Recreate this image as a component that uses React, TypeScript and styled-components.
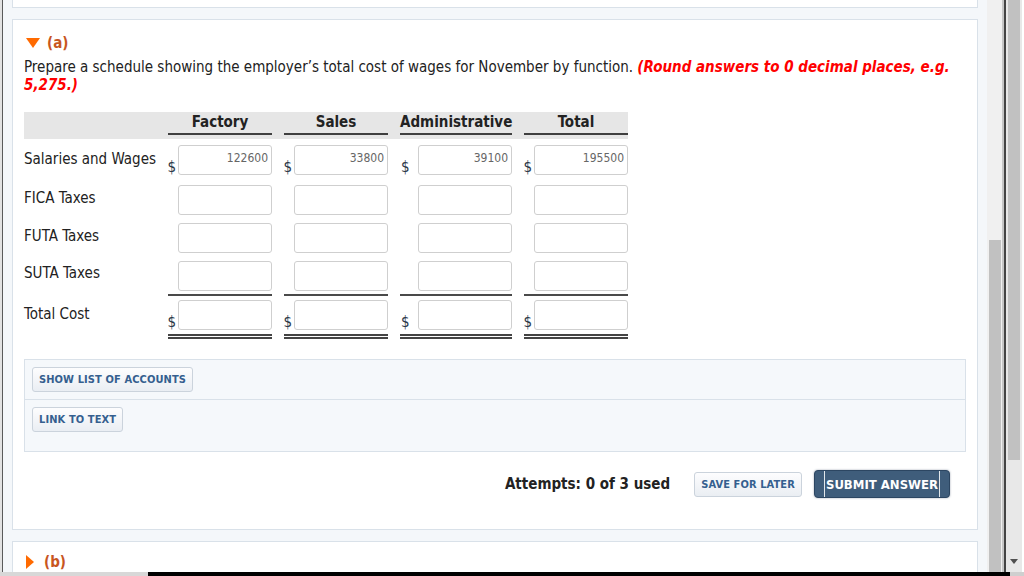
import React from "react";
import styled, { createGlobalStyle } from "styled-components";

const Global = createGlobalStyle`
  html, body { margin: 0; padding: 0; }
  body {
    width: 1024px; height: 576px; overflow: hidden;
    font-family: "DejaVu Sans Condensed", "DejaVu Sans", "Liberation Sans", sans-serif;
    color: #222;
  }
  * { box-sizing: border-box; }
`;

const Screen = styled.div`
  width: 1024px;
  height: 576px;
  display: flex;
  flex-direction: column;
`;

const Frame = styled.div`
  height: 572px;
  display: flex;
  overflow: hidden;
`;

const LeftEdge = styled.div`
  width: 3px;
  background: #e2e2e2;
  border-right: 1px solid #5a5a5a;
  flex: none;
`;

const Main = styled.div`
  width: 984px;
  flex: none;
  background: #f4f7fa;
  padding: 0 9px;
  display: flex;
  flex-direction: column;
  gap: 11px;
  overflow: hidden;
`;

const TopCardStub = styled.div`
  height: 8px;
  flex: none;
  background: #fff;
  border: 1px solid #d9e1e9;
  border-top: none;
`;

const Card = styled.section<{ $short?: boolean }>`
  flex: none;
  background: #fff;
  border: 1px solid #d9e1e9;
  padding: ${(p) => (p.$short ? "11px" : "14px")} 11px 0 11px;
  height: ${(p) => (p.$short ? "40px" : "511px")};
  display: flex;
  flex-direction: column;
`;

const PartHead = styled.div`
  display: flex;
  align-items: center;
  gap: 7px;
  height: 18px;
  padding-left: 2px;
`;

const PartLabel = styled.span<{ $shift?: number }>`
  font-weight: bold;
  font-size: 15px;
  line-height: 18px;
  color: #c8561f;
  margin-left: ${(p) => p.$shift ?? 0}px;
`;

const Prompt = styled.p`
  margin: 6px 0 0 0;
  font-size: 15px;
  line-height: 18px;
  color: #222;
  padding-right: 8px;
`;

const Hint = styled.em`
  color: #f00;
  font-weight: bold;
`;

const Table = styled.div`
  margin-top: 18px;
  width: 604px;
  display: flex;
  flex-direction: column;
`;

const cols = "132px 104px 104px 112px 104px";

const HeadRow = styled.div`
  display: grid;
  grid-template-columns: ${cols};
  column-gap: 12px;
  background: #e6e6e6;
  height: 27px;
  padding-top: 1px;
`;

const HeadCell = styled.div`
  font-weight: bold;
  font-size: 15px;
  text-align: center;
  height: 22px;
  line-height: 19px;
  border-bottom: 2px solid #3f3f3f;
  white-space: nowrap;
`;

const Row = styled.div<{ $pad: number }>`
  display: grid;
  grid-template-columns: ${cols};
  column-gap: 12px;
  padding-top: ${(p) => p.$pad}px;
`;

const RowLabel = styled.div<{ $lift: number }>`
  font-size: 15px;
  display: flex;
  align-items: center;
  padding-bottom: ${(p) => p.$lift}px;
  white-space: nowrap;
`;

const Cell = styled.div<{ $rule?: "single" | "double" }>`
  display: flex;
  justify-content: flex-end;
  align-items: flex-end;
  gap: 2px;
  ${(p) =>
    p.$rule === "single"
      ? "border-bottom: 2px solid #4a4a4a; padding-bottom: 3px;"
      : p.$rule === "double"
      ? "border-bottom: 5px double #444; padding-bottom: 4px;"
      : ""}
`;

const Dollar = styled.span`
  font-size: 15px;
  line-height: 15px;
  color: #2d3a4a;
  margin-right: auto;
  padding-left: 1px;
`;

const Field = styled.input`
  width: 94px;
  height: 30px;
  border: 1px solid #cfcfcf;
  border-radius: 3px;
  background: #fff;
  font-family: "DejaVu Sans Condensed", "DejaVu Sans", sans-serif;
  font-size: 12px;
  color: #666;
  text-align: right;
  padding: 0 3px 4px 3px;
  outline: none;
`;

const Tools = styled.div`
  margin-top: 20px;
  background: #f5f8fb;
  border: 1px solid #d9e1e9;
  display: flex;
  flex-direction: column;
`;

const ToolRow = styled.div<{ $last?: boolean }>`
  padding: 7px 7px ${(p) => (p.$last ? "19px" : "7px")} 7px;
  ${(p) => (p.$last ? "" : "border-bottom: 1px solid #d9e1e9;")}
  display: flex;
`;

const LightButton = styled.button`
  height: 25px;
  padding: 0 6px;
  border: 1px solid #cbd3dc;
  border-radius: 3px;
  background: linear-gradient(#fdfdfe, #eaeef3);
  color: #355f8f;
  font-family: "DejaVu Sans Condensed", "DejaVu Sans", sans-serif;
  font-weight: bold;
  font-size: 11px;
  letter-spacing: 0.1px;
  cursor: pointer;
`;

const Footer = styled.div`
  margin-top: 18px;
  display: flex;
  justify-content: flex-end;
  align-items: center;
  padding-right: 16px;
  gap: 12px;
`;

const Attempts = styled.span`
  font-weight: bold;
  font-size: 15px;
  margin-right: 12px;
`;

const SubmitButton = styled.button`
  height: 28px;
  padding: 0 9px;
  border: 1px solid #2c4662;
  border-radius: 4px;
  background: #3f5d7b;
  box-shadow: 0 0 2px rgba(40, 60, 90, 0.5);
  color: #fff;
  font-family: "DejaVu Sans Condensed", "DejaVu Sans", sans-serif;
  font-weight: bold;
  font-size: 13px;
  display: flex;
  align-items: stretch;
  cursor: pointer;
`;

const SubmitInner = styled.span`
  border-left: 1px solid rgba(255, 255, 255, 0.85);
  border-right: 1px solid rgba(255, 255, 255, 0.85);
  padding: 0 1px;
  display: flex;
  align-items: center;
`;

const ScrollA = styled.div`
  width: 15px;
  flex: none;
  background: #f0f0f0;
  padding: 240px 1px 0 2px;
  display: flex;
  flex-direction: column;
`;

const Thumb = styled.div<{ $h?: number }>`
  background: #c1c1c1;
  ${(p) => (p.$h ? `height: ${p.$h}px;` : "flex: 1;")}
`;

const Gutter = styled.div`
  width: 4px;
  flex: none;
  background: #c6c6c6;
  border-right: 2px solid #444;
`;

const ScrollB = styled.div`
  width: 16px;
  flex: none;
  background: #e8e8e8;
  padding: 0 2px 0 2px;
  display: flex;
  flex-direction: column;
`;

const ArrowBox = styled.div`
  margin-top: auto;
  height: 22px;
  display: flex;
  justify-content: center;
  align-items: center;
`;

const BottomBar = styled.div`
  height: 4px;
  display: flex;
`;

const BarSeg = styled.div<{ $w: number; $c: string }>`
  width: ${(p) => p.$w}px;
  background: ${(p) => p.$c};
`;

const Down = () => (
  <svg width="8" height="5" viewBox="0 0 8 5">
    <path d="M0 0 H8 L4 5 Z" fill="#505050" />
  </svg>
);

const TriDown = () => (
  <svg width="14" height="10" viewBox="0 0 14 10">
    <path d="M0 0 H14 L7 10 Z" fill="#ff6a00" />
  </svg>
);

const TriRight = () => (
  <svg width="8" height="14" viewBox="0 0 8 14">
    <path d="M0 0 L8 7 L0 14 Z" fill="#ff6a00" />
  </svg>
);

type RowDef = {
  label: string;
  values: string[];
  dollar: boolean;
  rule?: "single" | "double";
  pad: number;
  lift: number;
};

const rows: RowDef[] = [
  { label: "Salaries and Wages", values: ["122600", "33800", "39100", "195500"], dollar: true, pad: 6, lift: 3 },
  { label: "FICA Taxes", values: ["", "", "", ""], dollar: false, pad: 10, lift: 4 },
  { label: "FUTA Taxes", values: ["", "", "", ""], dollar: false, pad: 8, lift: 4 },
  { label: "SUTA Taxes", values: ["", "", "", ""], dollar: false, pad: 8, rule: "single", lift: 12 },
  { label: "Total Cost", values: ["", "", "", ""], dollar: true, pad: 4, rule: "double", lift: 12 },
];

export default function App() {
  return (
    <Screen>
      <Global />
      <Frame>
        <LeftEdge />
        <Main>
          <TopCardStub />
          <Card>
            <PartHead>
              <TriDown />
              <PartLabel>(a)</PartLabel>
            </PartHead>
            <Prompt>
              Prepare a schedule showing the employer’s total cost of wages for November by function.{" "}
              <Hint>(Round answers to 0 decimal places, e.g. 5,275.)</Hint>
            </Prompt>
            <Table>
              <HeadRow>
                <div />
                <HeadCell>Factory</HeadCell>
                <HeadCell>Sales</HeadCell>
                <HeadCell>Administrative</HeadCell>
                <HeadCell>Total</HeadCell>
              </HeadRow>
              {rows.map((r) => (
                <Row key={r.label} $pad={r.pad}>
                  <RowLabel $lift={r.lift}>{r.label}</RowLabel>
                  {r.values.map((v, i) => (
                    <Cell key={i} $rule={r.rule}>
                      {r.dollar && <Dollar>$</Dollar>}
                      <Field defaultValue={v} />
                    </Cell>
                  ))}
                </Row>
              ))}
            </Table>
            <Tools>
              <ToolRow>
                <LightButton>SHOW LIST OF ACCOUNTS</LightButton>
              </ToolRow>
              <ToolRow $last>
                <LightButton>LINK TO TEXT</LightButton>
              </ToolRow>
            </Tools>
            <Footer>
              <Attempts>Attempts: 0 of 3 used</Attempts>
              <LightButton>SAVE FOR LATER</LightButton>
              <SubmitButton>
                <SubmitInner>SUBMIT ANSWER</SubmitInner>
              </SubmitButton>
            </Footer>
          </Card>
          <Card $short>
            <PartHead>
              <TriRight />
              <PartLabel $shift={3}>(b)</PartLabel>
            </PartHead>
          </Card>
        </Main>
        <ScrollA>
          <Thumb />
        </ScrollA>
        <Gutter />
        <ScrollB>
          <Thumb $h={460} />
          <ArrowBox>
            <Down />
          </ArrowBox>
        </ScrollB>
      </Frame>
      <BottomBar>
        <BarSeg $w={148} $c="#d8d8d8" />
        <BarSeg $w={862} $c="#000" />
        <BarSeg $w={14} $c="#cfcfcf" />
      </BottomBar>
    </Screen>
  );
}
